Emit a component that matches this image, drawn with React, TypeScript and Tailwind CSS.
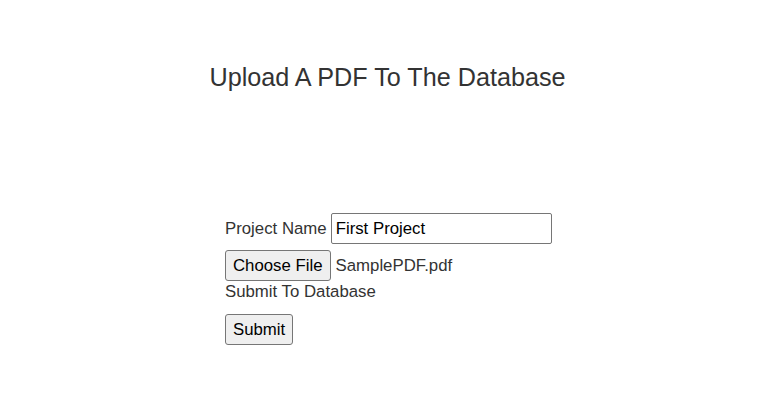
export default function App() {
  return (
    <div className="min-h-screen bg-white text-[#333] font-['Liberation_Sans',Arial,sans-serif]">
      <h1 className="pt-[62px] pl-[7px] text-center text-[25.2px] leading-[30px] font-normal">
        Upload A PDF To The Database
      </h1>
      <form className="mt-[121px] ml-[225px] flex flex-col items-start text-[16.8px]">
        <div className="flex items-center">
          <label htmlFor="project">Project Name</label>
          <input
            id="project"
            defaultValue="First Project"
            className="ml-[4px] w-[221px] h-[31px] px-[4px] border border-[#767676] rounded-[2px] text-black outline-none"
          />
        </div>
        <div className="mt-[6px] flex items-center">
          <button
            type="button"
            className="h-[31px] px-[7px] border border-[#767676] rounded-[3px] bg-[#efefef] text-black"
          >
            Choose File
          </button>
          <span className="ml-[5px]">SamplePDF.pdf</span>
        </div>
        <p className="mt-[1px] leading-[20px]">Submit To Database</p>
        <button
          type="submit"
          className="mt-[12px] h-[31px] px-[7px] border border-[#767676] rounded-[3px] bg-[#efefef] text-black"
        >
          Submit
        </button>
      </form>
    </div>
  );
}
